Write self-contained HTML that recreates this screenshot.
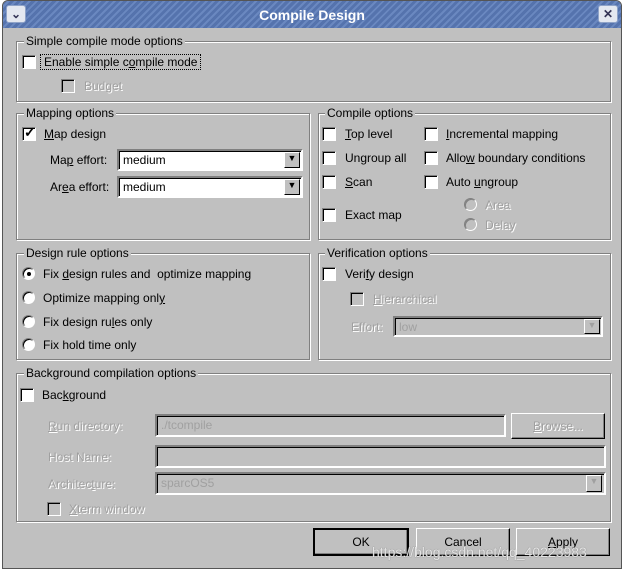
<!DOCTYPE html><html><head><style>
*{box-sizing:border-box}
body{margin:0;width:627px;height:572px;background:#fff;font:12px "Liberation Sans",sans-serif;color:#000;position:relative;overflow:hidden}
.a{position:absolute}
.win{left:2px;top:0;width:620px;height:569px;background:#c0c0c0;border:1px solid #555;border-radius:6px 6px 0 0}
.title{left:3px;top:1px;width:618px;height:27px;background:repeating-linear-gradient(135deg,#5573ad 0 3px,#6a88c0 3px 5px);border-radius:5px 5px 0 0;color:#fff;font-weight:bold;font-size:14px;text-align:center;line-height:28px}
.tb{width:20px;height:18px;top:5px;background:#e4e8f0;border:1px solid #8fa3c8;border-radius:3px;color:#335;font-size:12px;text-align:center;line-height:16px;font-weight:bold}
.g{border:1px solid #808080;box-shadow:inset 1px 1px 0 #fff,1px 1px 0 #fff}
.lbl{background:#c0c0c0;padding:0 2px;line-height:14px}
.cb{width:14px;height:14px;background:#fff;border:1px solid;border-color:#808080 #fff #fff #808080;box-shadow:inset 1px 1px 0 #000}
.cb.d{background:#c0c0c0}
.rd{width:13px;height:13px;border-radius:50%;background:#fff;border:1px solid;border-color:#808080 #fff #fff #808080;box-shadow:inset 1px 1px 0 #000}
.rd.d{background:#c0c0c0;box-shadow:inset 1px 1px 0 #808080}
.t{line-height:14px;white-space:nowrap}
.dis{color:#a0a0a0;text-shadow:1px 1px 0 #fff}
.in{background:#fff;border:2px solid;border-color:#808080 #fff #fff #808080;box-shadow:inset 1px 1px 0 #000;padding-left:4px;line-height:19px}
.in.d{background:#c0c0c0;color:#a0a0a0}
.arr{width:16px;background:#c0c0c0;border:1px solid;border-color:#fff #000 #000 #fff;font-size:9px;text-align:center}
.btn{background:#c0c0c0;border:1px solid;border-color:#fff #000 #000 #fff;box-shadow:inset -1px -1px 0 #808080;text-align:center;line-height:26px}
u{text-decoration:underline}
</style></head><body>
<div class="a win"></div>
<div class="a title">Compile Design</div>
<div class="a tb" style="left:6px">&#8964;</div>
<div class="a tb" style="left:598px">✕</div>

<div class="a g" style="left:16px;top:41px;width:595px;height:61px"></div>
<div class="a lbl" style="left:24px;top:34px">Simple compile mode options</div>
<div class="a cb" style="left:22px;top:55px"></div>
<div class="a t" style="left:40px;top:54px;border:1px dotted #000;padding:0 3px">Enable simple c<u>o</u>mpile mode</div>
<div class="a cb d" style="left:61px;top:79px"></div>
<div class="a t dis" style="left:84px;top:79px">Budget</div>

<div class="a g" style="left:16px;top:113px;width:294px;height:127px"></div>
<div class="a lbl" style="left:24px;top:106px">Mapping options</div>
<div class="a cb" style="left:22px;top:127px"></div>
<div class="a t" style="left:24px;top:125px;font-size:14px;font-weight:bold">✓</div>
<div class="a t" style="left:44px;top:127px"><u>M</u>ap design</div>
<div class="a t" style="left:50px;top:153px">Ma<u>p</u> effort:</div>
<div class="a in" style="left:117px;top:149px;width:186px;height:22px">medium</div>
<div class="a arr" style="left:284px;top:152px;height:16px">▼</div>
<div class="a t" style="left:50px;top:180px">Ar<u>e</u>a effort:</div>
<div class="a in" style="left:117px;top:176px;width:186px;height:22px">medium</div>
<div class="a arr" style="left:284px;top:179px;height:16px">▼</div>

<div class="a g" style="left:318px;top:113px;width:293px;height:127px"></div>
<div class="a lbl" style="left:325px;top:106px">Compile options</div>
<div class="a cb" style="left:322px;top:127px"></div><div class="a t" style="left:345px;top:127px"><u>T</u>op level</div>
<div class="a cb" style="left:424px;top:127px"></div><div class="a t" style="left:446px;top:127px"><u>I</u>ncremental mapping</div>
<div class="a cb" style="left:322px;top:151px"></div><div class="a t" style="left:345px;top:151px">Ungroup all</div>
<div class="a cb" style="left:424px;top:151px"></div><div class="a t" style="left:446px;top:151px">Allo<u>w</u> boundary conditions</div>
<div class="a cb" style="left:322px;top:175px"></div><div class="a t" style="left:345px;top:175px"><u>S</u>can</div>
<div class="a cb" style="left:424px;top:175px"></div><div class="a t" style="left:446px;top:175px">Auto <u>u</u>ngroup</div>
<div class="a cb" style="left:322px;top:208px"></div><div class="a t" style="left:345px;top:208px">Exact map</div>
<div class="a rd d" style="left:464px;top:198px"></div><div class="a t dis" style="left:485px;top:198px">Area</div>
<div class="a rd d" style="left:464px;top:218px"></div><div class="a t dis" style="left:485px;top:218px">Delay</div>

<div class="a g" style="left:16px;top:253px;width:294px;height:107px"></div>
<div class="a lbl" style="left:24px;top:246px">Design rule options</div>
<div class="a rd" style="left:22px;top:267px"></div><div class="a" style="left:27px;top:272px;width:4px;height:4px;border-radius:50%;background:#000"></div>
<div class="a t" style="left:43px;top:267px">Fix <u>d</u>esign rules and &nbsp;optimize mapping</div>
<div class="a rd" style="left:22px;top:291px"></div><div class="a t" style="left:43px;top:291px">Optimize mapping onl<u>y</u></div>
<div class="a rd" style="left:22px;top:315px"></div><div class="a t" style="left:43px;top:315px">Fix design ru<u>l</u>es only</div>
<div class="a rd" style="left:22px;top:338px"></div><div class="a t" style="left:43px;top:338px">Fix hold time only</div>

<div class="a g" style="left:318px;top:253px;width:293px;height:107px"></div>
<div class="a lbl" style="left:325px;top:246px">Verification options</div>
<div class="a cb" style="left:322px;top:267px"></div><div class="a t" style="left:345px;top:267px">Veri<u>f</u>y design</div>
<div class="a cb d" style="left:350px;top:292px"></div><div class="a t dis" style="left:373px;top:292px"><u>H</u>ierarchical</div>
<div class="a t dis" style="left:351px;top:320px">Effort:</div>
<div class="a in d" style="left:393px;top:316px;width:210px;height:21px;line-height:18px">low</div>
<div class="a arr" style="left:584px;top:319px;height:15px;color:#a0a0a0">▼</div>

<div class="a g" style="left:16px;top:373px;width:595px;height:149px"></div>
<div class="a lbl" style="left:24px;top:366px">Background compilation options</div>
<div class="a cb" style="left:20px;top:388px"></div><div class="a t" style="left:42px;top:388px">Bac<u>k</u>ground</div>
<div class="a t dis" style="left:48px;top:419px"><u>R</u>un directory:</div>
<div class="a in d" style="left:155px;top:414px;width:351px;height:23px">./tcompile</div>
<div class="a btn dis" style="left:511px;top:413px;width:94px;height:26px;line-height:24px"><u>B</u>rowse...</div>
<div class="a t dis" style="left:48px;top:450px">Host Name:</div>
<div class="a in d" style="left:155px;top:445px;width:451px;height:23px"></div>
<div class="a t dis" style="left:48px;top:477px">Architec<u>t</u>ure:</div>
<div class="a in d" style="left:155px;top:472px;width:451px;height:23px">sparcOS5</div>
<div class="a arr" style="left:586px;top:475px;height:17px;color:#a0a0a0">▼</div>
<div class="a cb d" style="left:47px;top:502px"></div><div class="a t dis" style="left:69px;top:502px"><u>X</u>term window</div>

<div class="a btn" style="left:313px;top:528px;width:96px;height:28px;border:2px solid #000;line-height:24px">OK</div>
<div class="a btn" style="left:416px;top:528px;width:94px;height:28px">Cancel</div>
<div class="a btn" style="left:516px;top:528px;width:94px;height:28px"><u>A</u>pply</div>
<div class="a t" style="left:372px;top:545px;font-size:14px;color:rgba(255,255,255,.8);text-shadow:0 0 1px #666">https://blog.csdn.net/qq_40223983</div>
</body></html>
